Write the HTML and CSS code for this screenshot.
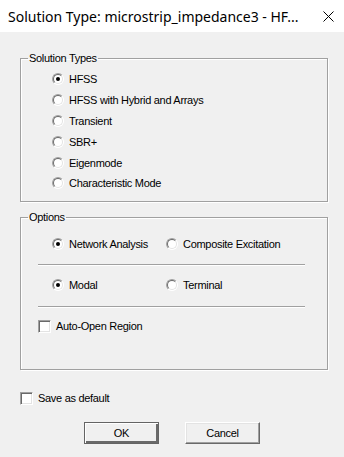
FILE: index.html
```html
<!DOCTYPE html>
<html lang="en">
<head>
    <meta charset="UTF-8">
    <meta name="viewport" content="width=device-width, initial-scale=1.0">
    <title>Solution Type</title>
    <link rel="stylesheet" href="styles.css">
</head>
<body>

    <div class="window">
        <!-- 標題列 -->
        <div class="titlebar">
            <span class="title">Solution Type: microstrip_impedance3 - HF...</span>
            <span class="close">
                <svg width="11" height="11" viewBox="0 0 11 11">
                    <path d="M0.5 0.5 L10.5 10.5 M10.5 0.5 L0.5 10.5" stroke="#000" stroke-width="1" fill="none"/>
                </svg>
            </span>
        </div>

        <div class="content">
            <fieldset class="group types">
                <legend>Solution Types</legend>
                <label class="opt"><span class="radio checked"></span>HFSS</label>
                <label class="opt"><span class="radio"></span>HFSS with Hybrid and Arrays</label>
                <label class="opt"><span class="radio"></span>Transient</label>
                <label class="opt"><span class="radio"></span>SBR+</label>
                <label class="opt"><span class="radio"></span>Eigenmode</label>
                <label class="opt"><span class="radio"></span>Characteristic Mode</label>
            </fieldset>

            <fieldset class="group options">
                <legend>Options</legend>
                <div class="pair">
                    <label class="opt col"><span class="radio checked"></span>Network Analysis</label>
                    <label class="opt"><span class="radio"></span>Composite Excitation</label>
                </div>
                <div class="sep"></div>
                <div class="pair">
                    <label class="opt col"><span class="radio checked"></span>Modal</label>
                    <label class="opt"><span class="radio"></span>Terminal</label>
                </div>
                <div class="sep sep-last"></div>
                <label class="opt auto"><span class="check"></span>Auto-Open Region</label>
            </fieldset>

            <label class="opt save"><span class="check"></span>Save as default</label>

            <div class="buttons">
                <button class="btn default">OK</button>
                <button class="btn">Cancel</button>
            </div>
        </div>
    </div>

</body>
</html>
```

FILE: styles.css
```css
/* 基本頁面設置 */
body {
    margin: 0;
    padding: 0;
    background-color: #f0f0f0;
    font-family: 'Liberation Sans', Arial, sans-serif;
    font-size: 11px;
    letter-spacing: -0.3px;
    color: #000;
}

.window {
    width: 344px;
    height: 457px;
    overflow: hidden;
    background-color: #f0f0f0;
}

/* 標題列 */
.titlebar {
    height: 32px;
    background-color: #fff;
    display: flex;
    align-items: center;
    padding: 0 0 0 8px;
    box-sizing: border-box;
}

.title {
    font-family: 'Noto Sans', sans-serif;
    font-size: 14px;
    letter-spacing: 0;
    color: #000;
    white-space: nowrap;
}

.close {
    display: flex;
    margin-left: auto;
    margin-right: 10px;
    margin-top: 1px;
}

.content {
    padding: 0 16px 0 20px;
}

/* 群組框 */
.group {
    margin: 0;
    padding: 0;
    border: 1px solid #a0a0a0;
    box-shadow: 1px 1px 0 #fff, inset 1px 1px 0 #fff;
    width: 308px;
    box-sizing: border-box;
}

.group legend {
    margin-left: 7px;
    padding: 0 1px;
    line-height: 13px;
}

.types {
    margin-top: 20px;
    padding: 4px 0 7px 0;
}

.types .opt {
    height: 20.8px;
    margin-left: 31px;
}

.options {
    margin-top: 9px;
    padding: 10px 0 32px 0;
}

.options .opt {
    height: 21px;
}

.pair {
    display: flex;
    padding-left: 31px;
}

.col {
    width: 114px;
}

.sep {
    height: 0;
    border-top: 1px solid #a0a0a0;
    border-bottom: 1px solid #fff;
    margin: 9px 22px 9px 17px;
}

.sep-last {
    margin: 10px 22px 8px 17px;
}

.auto {
    margin-left: 17px;
}

/* 選項 */
.opt {
    display: flex;
    align-items: center;
    gap: 5px;
    white-space: nowrap;
}

.radio {
    position: relative;
    flex: none;
    width: 12px;
    height: 12px;
    box-sizing: border-box;
    border-radius: 50%;
    border: 1px solid;
    border-color: #a0a0a0 #fff #fff #a0a0a0;
    background-color: #fff;
}

.radio::before {
    content: "";
    position: absolute;
    inset: 0;
    border-radius: 50%;
    border: 1px solid;
    border-color: #696969 #e3e3e3 #e3e3e3 #696969;
}

.radio.checked::after {
    content: "";
    position: absolute;
    left: 3px;
    top: 3px;
    width: 4px;
    height: 4px;
    border-radius: 50%;
    background-color: #000;
}

.check {
    flex: none;
    width: 13px;
    height: 13px;
    box-sizing: border-box;
    border: 1px solid;
    border-color: #a0a0a0 #fff #fff #a0a0a0;
    background-color: #fff;
    box-shadow: inset 1px 1px 0 #696969, inset -1px -1px 0 #e3e3e3;
}

.save {
    margin-top: 18px;
    height: 21px;
}

/* 按鈕樣式 */
.buttons {
    display: flex;
    justify-content: center;
    gap: 26px;
    margin-top: 13px;
    padding-right: 4px;
}

.btn {
    width: 75px;
    height: 22px;
    padding: 0;
    font-family: 'Liberation Sans', Arial, sans-serif;
    font-size: 11px;
    letter-spacing: -0.3px;
    color: #000;
    background-color: #f0f0f0;
    border: 1px solid;
    border-color: #fff #696969 #696969 #fff;
    box-shadow: inset -1px -1px 0 #a0a0a0, inset 1px 1px 0 #e3e3e3;
}

.btn.default {
    border: 1px solid #646464;
    box-shadow: inset 1px 1px 0 #fff, inset -2px -2px 0 #696969;
}
```
